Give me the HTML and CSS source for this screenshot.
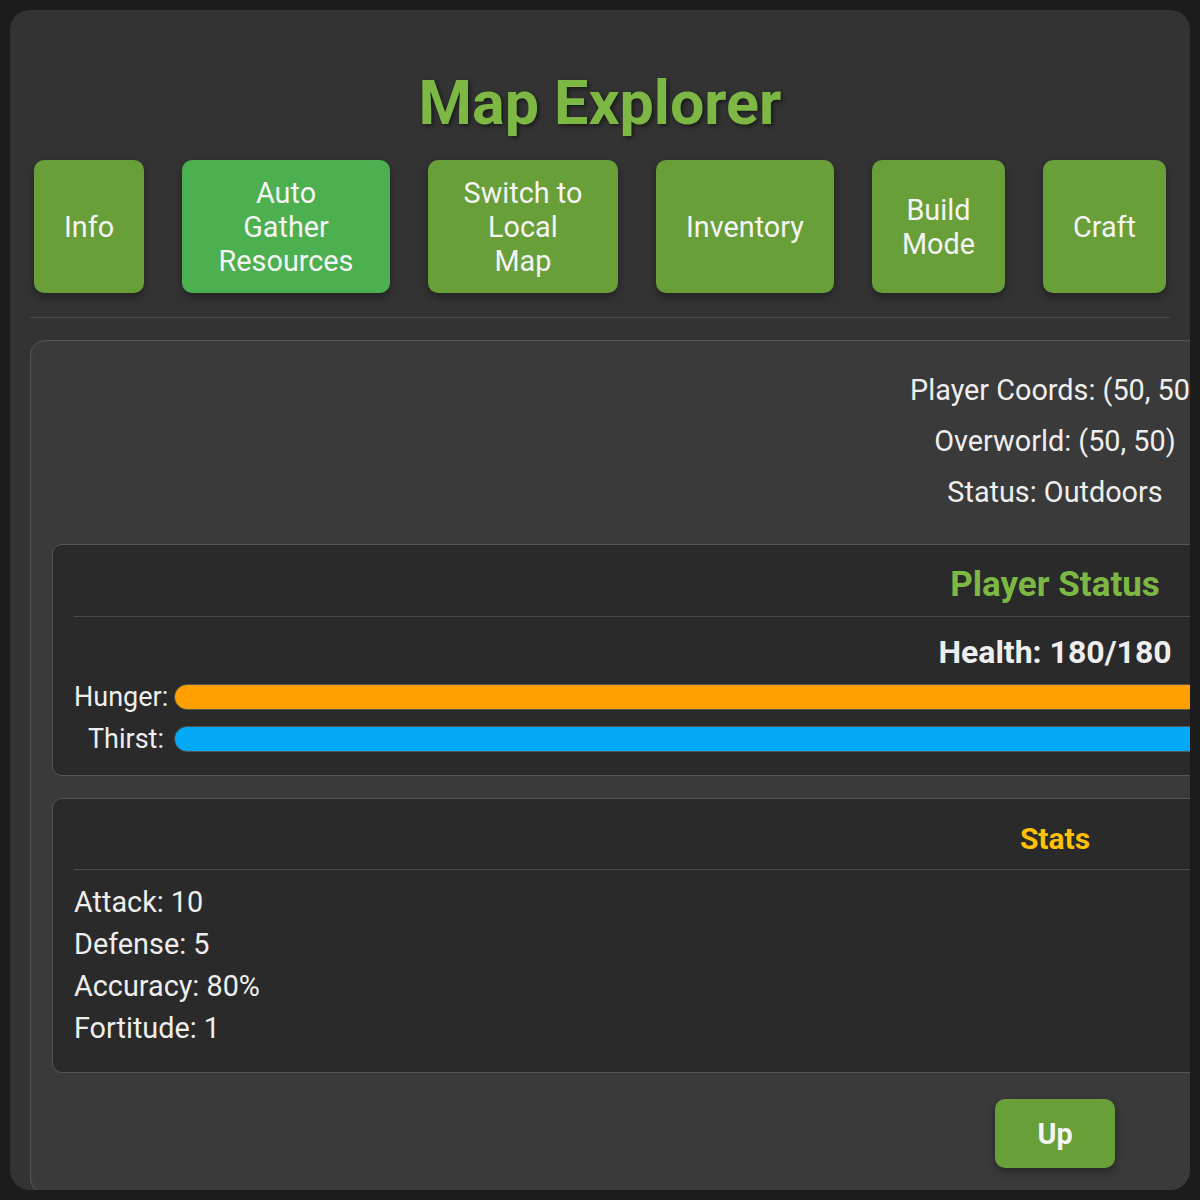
FILE: index.html
```html
<!DOCTYPE html>
<html lang="en">
  <head>
    <meta charset="UTF-8" />
    <meta name="viewport" content="width=device-width, initial-scale=1.0" />
    <title>Map Explorer</title>
    <link rel="stylesheet" href="styles.css">
  </head>
  <body>
    <div class="app">
      <header class="top">
        <h1 class="title">Map Explorer</h1>
        <nav class="controls">
          <button class="btn">Info</button>
          <button class="btn btn-active">Auto Gather Resources</button>
          <button class="btn">Switch to Local Map</button>
          <button class="btn">Inventory</button>
          <button class="btn">Build Mode</button>
          <button class="btn">Craft</button>
        </nav>
      </header>

      <main class="game">
        <div class="location">
          <p>Player Coords: (50, 50)</p>
          <p>Overworld: (50, 50)</p>
          <p>Status: Outdoors</p>
        </div>

        <section class="panel">
          <h2 class="panel-title">Player Status</h2>
          <div class="health">Health: 180/180</div>
          <div class="meter">
            <span class="meter-label">Hunger:</span>
            <div class="meter-track">
              <div class="meter-fill hunger" style="width: 100%"></div>
            </div>
          </div>
          <div class="meter">
            <span class="meter-label">Thirst:</span>
            <div class="meter-track">
              <div class="meter-fill thirst" style="width: 100%"></div>
            </div>
          </div>
        </section>

        <section class="panel">
          <h3 class="panel-title stats-title">Stats</h3>
          <ul class="stat-list">
            <li>Attack: 10</li>
            <li>Defense: 5</li>
            <li>Accuracy: 80%</li>
            <li>Fortitude: 1</li>
          </ul>
        </section>

        <div class="moves">
          <button class="btn btn-move">Up</button>
        </div>
      </main>
    </div>
  </body>
</html>
```

FILE: styles.css
```css
/* Reset some default styles */
* {
  margin: 0;
  padding: 0;
  box-sizing: border-box;
}

body {
  font-family: Roboto, "Liberation Sans", sans-serif;
  font-size: 1.8rem;
  background-color: #1c1c1c;
  color: #eeeeee;
  padding: 10px;
}

.app {
  height: calc(100vh - 20px);
  background-color: #333333;
  border-radius: 20px;
  padding: 20px;
  overflow: hidden;
}

.title {
  font-size: 61px;
  line-height: 72px;
  font-weight: 700;
  text-align: center;
  color: #7db844;
  margin: 37px 0 17px;
  text-shadow: 2px 2px 4px rgba(0, 0, 0, 0.5);
}

.controls {
  display: flex;
  gap: 30px;
  padding-bottom: 20px;
  border-bottom: 1px solid #4a4a4a;
}

.btn {
  font-family: inherit;
  font-size: 1.8rem;
  line-height: 34px;
  color: #f4f4f4;
  background-color: #689f38;
  border: none;
  border-radius: 10px;
  padding: 15.5px 30px;
  margin: 4px;
  cursor: pointer;
  box-shadow: 0 4px 8px rgba(0, 0, 0, 0.35);
}

.btn:hover {
  background-color: #7cb342;
}

.btn-active {
  background-color: #4caf50;
}

/* game area is wider than the window, the card clips it */
.game {
  width: 2050px;
  margin-top: 22px;
  padding: 21px;
  background-color: #3a3a3a;
  border: 1px solid #555555;
  border-radius: 15px;
  box-shadow: inset 0 0 12px rgba(255, 255, 255, 0.03);
}

.location {
  text-align: center;
  padding-top: 3px;
  margin-bottom: 26px;
}

.location p {
  line-height: 35px;
  padding: 8px 0;
}

.panel {
  background-color: #2a2a2a;
  border: 1px solid #555555;
  border-radius: 10px;
  padding: 21px 21px 20px;
  margin-bottom: 22px;
}

.panel-title {
  font-size: 35px;
  line-height: 38px;
  font-weight: 700;
  text-align: center;
  color: #7db844;
  padding-bottom: 12px;
  border-bottom: 1px solid #4a4a4a;
}

.stats-title {
  font-size: 30px;
  line-height: 38px;
  padding-bottom: 11px;
  color: #ffc107;
}

.health {
  font-size: 32px;
  line-height: 38px;
  font-weight: 700;
  text-align: center;
  margin-top: 16px;
}

.meter {
  display: flex;
  align-items: center;
  height: 32px;
  margin-top: 10px;
  font-size: 27px;
}

.meter-label {
  width: 90px;
  margin-right: 10px;
  text-align: right;
  white-space: nowrap;
}

.meter-track {
  flex: 1;
  height: 26px;
  background-color: #444444;
  border: 1px solid #555555;
  border-radius: 13px;
  overflow: hidden;
}

.meter-fill {
  height: 100%;
}

.hunger {
  background-color: #ffa000;
}

.thirst {
  background-color: #03a9f4;
}

.stat-list {
  list-style: none;
  line-height: 42px;
  margin-top: 11px;
  padding-bottom: 3px;
}

.moves {
  display: flex;
  justify-content: center;
  margin-top: 4px;
}

.btn-move {
  width: 120px;
  font-weight: 700;
  padding: 17.5px 0;
}
```
